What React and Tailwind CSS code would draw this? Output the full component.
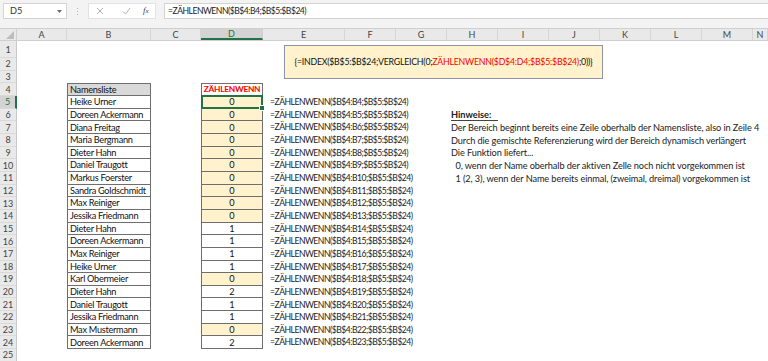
import React from 'react';

const NAMES = [
  'Heike Urner',
  'Doreen Ackermann',
  'Diana Freitag',
  'Maria Bergmann',
  'Dieter Hahn',
  'Daniel Traugott',
  'Markus Foerster',
  'Sandra Goldschmidt',
  'Max Reiniger',
  'Jessika Friedmann',
  'Dieter Hahn',
  'Doreen Ackermann',
  'Max Reiniger',
  'Heike Urner',
  'Karl Obermeier',
  'Dieter Hahn',
  'Daniel Traugott',
  'Jessika Friedmann',
  'Max Mustermann',
  'Doreen Ackermann',
];

const COLS = [
  { k: 'A', w: 'w-[50px]' },
  { k: 'B', w: 'w-[84px]' },
  { k: 'C', w: 'w-[50px]' },
  { k: 'D', w: 'w-[62px]' },
  { k: 'E', w: 'w-[82px]' },
  { k: 'F', w: 'w-[51px]' },
  { k: 'G', w: 'w-[51px]' },
  { k: 'H', w: 'w-[51px]' },
  { k: 'I', w: 'w-[51px]' },
  { k: 'J', w: 'w-[51px]' },
  { k: 'K', w: 'w-[51px]' },
  { k: 'L', w: 'w-[51px]' },
  { k: 'M', w: 'w-[51px]' },
  { k: 'N', w: 'w-[15px]' },
];

const HINTS = {
  7: 'Der Bereich beginnt bereits eine Zeile oberhalb der Namensliste, also in Zeile 4',
  8: 'Durch die gemischte Referenzierung wird der Bereich dynamisch verlängert',
  9: 'Die Funktion liefert...',
  10: '\u00a0\u00a00, wenn der Name oberhalb der aktiven Zelle noch nicht vorgekommen ist',
  11: '\u00a0\u00a01 (2, 3), wenn der Name bereits einmal, (zweimal, dreimal) vorgekommen ist',
};

const ROWS = Array.from({ length: 25 }, (_, i) => i + 1);

// B4 is the header, so the count for row r looks at B5..B(r-1)
const countAbove = (r) => {
  const name = NAMES[r - 5];
  return NAMES.slice(0, r - 5).filter((n) => n === name).length;
};

function Toolbar() {
  return (
    <div className="h-[28px] bg-[#f3f3f3] flex items-start pt-[3px]">
      <div className="ml-[3px] w-[64px] h-[16px] bg-white border border-[#d4d4d4] flex items-center justify-between pl-[6px] pr-[4px] text-[9.2px] text-[#333]">
        <span>D5</span>
        <svg width="5" height="3" viewBox="0 0 5 3">
          <polygon points="0,0 5,0 2.5,3" fill="#6b6b6b" />
        </svg>
      </div>
      <div className="w-[21px] h-[16px] flex flex-col items-center justify-center gap-[2px]">
        <span className="w-[1px] h-[1px] bg-[#b5b5b5]" />
        <span className="w-[1px] h-[1px] bg-[#b5b5b5]" />
        <span className="w-[1px] h-[1px] bg-[#b5b5b5]" />
      </div>
      <div className="w-[68px] h-[16px] bg-white border border-[#e2e2e2] flex items-center pl-[6px]">
        <svg width="8" height="8" viewBox="0 0 8 8" className="ml-[1px]">
          <path d="M1 1 L7 7 M7 1 L1 7" stroke="#b0b0b0" strokeWidth="1" fill="none" />
        </svg>
        <svg width="9" height="8" viewBox="0 0 9 8" className="ml-[18px]">
          <path d="M1 4.5 L3.5 7 L8 1" stroke="#b0b0b0" strokeWidth="1" fill="none" />
        </svg>
        <span className="ml-[12px] text-[9px] italic font-['Liberation_Serif',serif] text-[#444]">
          f<span className="text-[7px]">x</span>
        </span>
      </div>
      <div className="ml-[8px] flex-1 h-[16px] bg-white border-y border-l border-[#d4d4d4] flex items-center pl-[3px] text-[8.6px] tracking-[-0.5px] text-[#222] whitespace-nowrap">
        =ZÄHLENWENN($B$4:B4;$B$5:$B$24)
      </div>
    </div>
  );
}

function ColumnHeader() {
  return (
    <div className="h-[13px] flex bg-[#e9e9e9] border-y border-[#cfcfcf] text-[9px] text-[#444]">
      <div className="w-[17px] shrink-0 h-full flex items-end justify-end pr-[2px] pb-[1px] border-r border-[#cfcfcf]">
        <svg width="8" height="8" viewBox="0 0 8 8">
          <polygon points="8,0 8,8 0,8" fill="#bdbdbd" />
        </svg>
      </div>
      {COLS.map((c) =>
        c.k === 'D' ? (
          <div
            key={c.k}
            className={`${c.w} shrink-0 h-full flex items-center justify-center bg-[#d3d3d3] text-[#217346] border-b-2 border-[#217346] border-r border-r-[#cfcfcf]`}
          >
            {c.k}
          </div>
        ) : (
          <div key={c.k} className={`${c.w} shrink-0 h-full flex items-center justify-center border-r border-[#d6d6d6]`}>
            {c.k}
          </div>
        )
      )}
    </div>
  );
}

function RowHeader({ r }) {
  if (r === 5) {
    return (
      <div className="w-[17px] shrink-0 h-full flex items-center justify-center bg-[#d3d3d3] text-[#217346] border-r-2 border-[#217346] border-b border-b-[#d9d9d9] text-[9px]">
        {r}
      </div>
    );
  }
  return (
    <div className="w-[17px] shrink-0 h-full flex items-center justify-center bg-[#e9e9e9] text-[#444] border-r border-[#c9c9c9] border-b border-b-[#dadada] text-[9px]">
      {r}
    </div>
  );
}

function Cell({ r, col }) {
  const base = `${col.w} shrink-0 h-full relative`;

  if (col.k === 'B' && r >= 4 && r <= 24) {
    const head = r === 4;
    return (
      <div
        className={`${base} flex items-center pl-[2px] border-x border-b border-[#6e6e6e] whitespace-nowrap tracking-[-0.28px] text-[#111] ${
          head ? 'border-t bg-[#d9d9d9]' : ''
        }`}
      >
        {head ? 'Namensliste' : NAMES[r - 5]}
      </div>
    );
  }

  if (col.k === 'D' && r >= 4 && r <= 24) {
    if (r === 4) {
      return (
        <div className={`${base} flex items-center justify-center border-x border-y border-[#6e6e6e] font-bold text-[8.4px] tracking-[-0.3px] text-[#ff0000] whitespace-nowrap`}>
          ZÄHLENWENN
        </div>
      );
    }
    const v = countAbove(r);
    return (
      <div
        className={`${base} flex items-center justify-center border-x border-b border-[#6e6e6e] text-[#111] ${
          v === 0 ? 'bg-[#fff2cc]' : 'bg-white'
        }`}
      >
        {v}
        {r === 5 && (
          <div className="absolute -inset-[1px] border-2 border-[#217346] z-10">
            <span className="absolute -right-[4px] -bottom-[4px] w-[6px] h-[6px] bg-[#217346] border border-white" />
          </div>
        )}
      </div>
    );
  }

  if (col.k === 'E' && r >= 5 && r <= 24) {
    return (
      <div className={`${base} flex items-center pl-[7px] whitespace-nowrap text-[8.6px] tracking-[-0.5px] text-[#222]`}>
        =ZÄHLENWENN($B$4:B{r - 1};$B$5:$B$24)
      </div>
    );
  }

  if (col.k === 'H' && r === 6) {
    return (
      <div className={`${base} flex items-center`}>
        <div className="ml-[4px] w-full h-full flex items-center border-b border-[#444] font-bold text-[#222] whitespace-nowrap">
          Hinweise:
        </div>
      </div>
    );
  }

  if (col.k === 'H' && HINTS[r]) {
    return (
      <div className={`${base} flex items-center pl-[4px] whitespace-nowrap tracking-[-0.1px] text-[#222]`}>
        {HINTS[r]}
      </div>
    );
  }

  return <div className={base} />;
}

function Sheet() {
  return (
    <div className="relative text-[9.2px] leading-none">
      {ROWS.map((r) => (
        <div key={r} className={`flex ${r === 1 ? 'h-[17px]' : 'h-[12.67px]'}`}>
          <RowHeader r={r} />
          {COLS.map((c) => (
            <Cell key={c.k} r={r} col={c} />
          ))}
        </div>
      ))}

      {/* floating text box from the sheet */}
      <div className="absolute left-[284px] top-[4px] w-[319px] h-[34px] bg-[#fff2cc] border border-[#8a94a6] flex items-center justify-center whitespace-nowrap text-[8.8px] tracking-[-0.25px] text-[#111]">
        <span>{'{=INDEX($B$5:$B$24;VERGLEICH(0;'}</span>
        <span className="text-[#ff0000]">ZÄHLENWENN($D$4:D4;$B$5:$B$24)</span>
        <span>{';0))}'}</span>
      </div>
    </div>
  );
}

export default function App() {
  return (
    <div className="w-[768px] h-[361px] overflow-hidden bg-white font-['Lato','Liberation_Sans',sans-serif]">
      <Toolbar />
      <ColumnHeader />
      <Sheet />
    </div>
  );
}
